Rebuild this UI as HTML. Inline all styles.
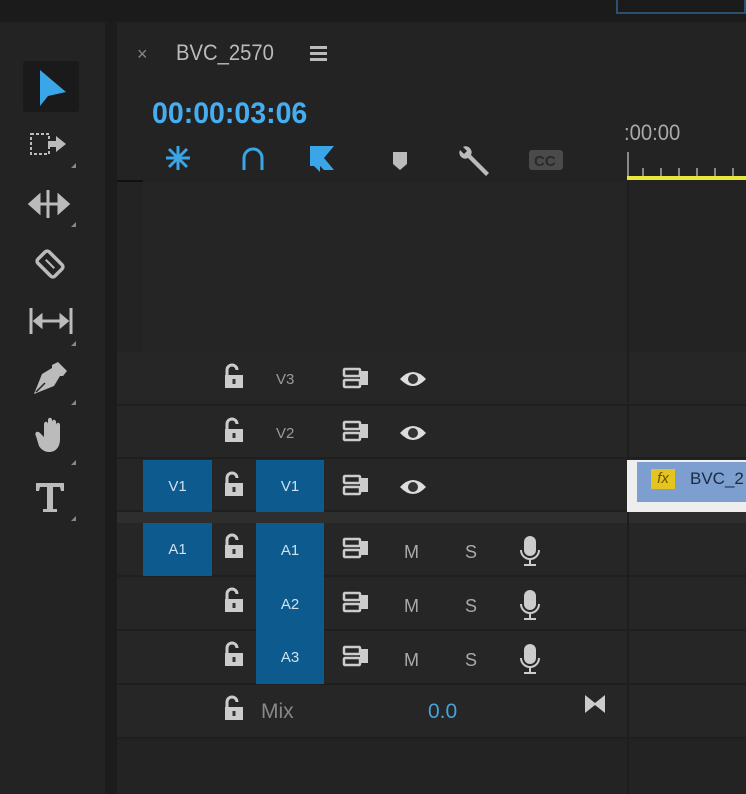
<!DOCTYPE html>
<html><head><meta charset="utf-8"><style>
*{margin:0;padding:0;box-sizing:border-box}
body{width:746px;height:794px;overflow:hidden;background:#232323;font-family:"Liberation Sans",sans-serif;position:relative}
.a{position:absolute}
.row{position:absolute;left:117px;width:629px;background:#262626;border-bottom:2px solid #1f1f1f}
.blue{position:absolute;background:#0c5a8e;color:#cfe0ee;font-size:15px;display:flex;align-items:center;justify-content:center}
.lbl{position:absolute;color:#9a9a9a;font-size:15px}
</style></head><body>
<div class="a" style="left:0;top:0;width:746px;height:22px;background:#1b1b1b"></div>
<div class="a" style="left:616px;top:0;width:130px;height:14px;border:2px solid #2d4f70;border-top:none"></div>
<div class="a" style="left:105px;top:22px;width:12px;height:772px;background:#1c1c1c"></div>
<div class="a" style="left:0;top:22px;width:105px;height:772px;background:#232323"></div>
<div class="a" style="left:23px;top:61px;width:56px;height:51px;background:#1a1a1a;border-radius:3px"></div>
<svg class="a" style="left:0;top:0" width="110" height="530">
<path d="M40 70 L40 106 L48 96 L66 92 Z" fill="#3aa6e8"/>
<g fill="none" stroke="#bbb" stroke-width="2" stroke-dasharray="3 2"><rect x="31" y="134" width="18" height="20"/></g>
<path d="M48 141 h8 v-5 l10 8 l-10 8 v-5 h-8z" fill="#bbb"/>
<path d="M48 190v28M30 204l9-8v16zM68 204l-9-8v16zM38 204h22" stroke="#bbb" stroke-width="3" fill="#bbb"/>
<g transform="rotate(45 50 264)"><rect x="38" y="256" width="24" height="16" rx="3" fill="none" stroke="#bbb" stroke-width="3.5"/><path d="M44 264h12" stroke="#bbb" stroke-width="2"/></g>
<path d="M31 308v26M71 308v26M35 321h32M35 321l6-5v10zM67 321l-6-5v10z" stroke="#bbb" stroke-width="3" fill="#bbb"/>
<path d="M58 362l9 9-4 5-3 0-6 10-20 8 8-20 10-6 0-3z" fill="#bbb"/><path d="M36 392l9-9" stroke="#232323" stroke-width="1.5"/>
<path d="M36 436c-2-3 1-6 4-3l4 4v-13c0-3 4-3 4 0v10-14c0-3 4-3 4 0v14-12c0-3 4-3 4 0v12-9c0-3 4-3 4 0v14c0 8-4 13-11 13-5 0-8-3-10-6z" fill="#bbb"/>
<path d="M36 483h28v8h-3l-1-4h-7v22h4v3h-14v-3h4v-22h-7l-1 4h-3z" fill="#bbb"/>
<g fill="#888"><path d="M76 163l-5 5h5z"/><path d="M76 222l-5 5h5z"/><path d="M76 341l-5 5h5z"/><path d="M76 400l-5 5h5z"/><path d="M76 460l-5 5h5z"/><path d="M76 516l-5 5h5z"/></g>
</svg>
<div class="a" style="left:117px;top:22px;width:629px;height:160px;background:#232323"></div>
<div class="a" style="left:137px;top:44px;color:#888;font-size:18px">×</div>
<div class="a" style="left:176px;top:40px;color:#bbb;font-size:22px;transform:scaleX(0.92);transform-origin:left">BVC_2570</div>
<div class="a" style="left:310px;top:46px;width:17px;height:15px;border-top:3px solid #bbb;border-bottom:3px solid #bbb"><div style="margin-top:3px;height:3px;background:#bbb"></div></div>
<div class="a" style="left:152px;top:97px;color:#46aef0;font-size:30px;font-weight:bold;transform:scaleX(0.95);transform-origin:left">00:00:03:06</div>
<svg class="a" style="left:150px;top:140px" width="430" height="40">
<g stroke="#3aa6e8" stroke-width="3" fill="none"><path d="M28 6v24M16 18h24M19 9l18 18M37 9l-18 18"/><path d="M94 30V18a9 9 0 0 1 18 0v12"/></g>
<path d="M160 6h24l-10 12 10 12h-10l-4-4v6l-6-6h-4z" fill="#3aa6e8"/>
<path d="M243 12h14v12l-7 6-7-6z" fill="#bbb"/>
<path d="M310 10a6 6 0 0 0 8 8l18 18 3-3-18-18a6 6 0 0 0-8-8l4 4-3 3z" fill="#bbb"/>
<rect x="379" y="10" width="34" height="20" rx="3" fill="#4a4a4a"/>
<text x="384" y="26" font-size="15" font-weight="bold" fill="#2a2a2a" font-family="Liberation Sans">CC</text>
</svg>
<div class="a" style="left:117px;top:180px;width:26px;height:2px;background:#111"></div>
<div class="a" style="left:143px;top:182px;width:484px;height:170px;background:#252525"></div>
<div class="a" style="left:627px;top:22px;width:119px;height:160px;background:#232323"></div>
<div class="a" style="left:624px;top:120px;color:#aaa;font-size:22px;transform:scaleX(0.92);transform-origin:left">:00:00</div>
<svg class="a" style="left:627px;top:150px" width="119" height="30"><g stroke="#888" stroke-width="2"><path d="M1 2v24M16 18v8M34 18v8M52 18v8M70 18v8M88 18v8M106 18v8"/></g><rect x="0" y="26" width="119" height="5" fill="#e8e83a"/></svg>
<div class="a" style="left:627px;top:182px;width:2px;height:612px;background:#1e1e1e"></div>
<div class="row" style="top:352px;height:54px"></div>
<div class="row" style="top:406px;height:53px"></div>
<div class="row" style="top:459px;height:53px"></div>
<div class="a" style="left:117px;top:512px;width:629px;height:11px;background:#2e2e2e"></div>
<div class="row" style="top:523px;height:54px"></div>
<div class="row" style="top:577px;height:54px"></div>
<div class="row" style="top:631px;height:54px"></div>
<div class="row" style="top:685px;height:54px"></div>
<div class="a" style="left:117px;top:739px;width:629px;height:55px;background:#232323"></div>
<div class="a" style="left:627px;top:352px;width:2px;height:442px;background:#1e1e1e"></div>
<div class="blue" style="left:143px;top:460px;width:69px;height:52px">V1</div>
<div class="blue" style="left:256px;top:460px;width:68px;height:52px">V1</div>
<div class="blue" style="left:143px;top:523px;width:69px;height:53px">A1</div>
<div class="blue" style="left:256px;top:523px;width:68px;height:54px">A1</div>
<div class="blue" style="left:256px;top:577px;width:68px;height:54px">A2</div>
<div class="blue" style="left:256px;top:631px;width:68px;height:53px">A3</div>
<div class="lbl" style="left:276px;top:371px">V3</div>
<div class="lbl" style="left:276px;top:425px">V2</div>
<div class="lbl" style="left:261px;top:700px;font-size:21px;color:#888">Mix</div>
<div class="a" style="left:428px;top:700px;font-size:21px;color:#4aa0d8">0.0</div>
<svg class="a" style="left:0;top:0" width="746" height="794">
<defs>
<g id="lk"><path d="M-7 0v-6a5 5 0 0 1 10 0" stroke="#ccc" stroke-width="3" fill="none"/><rect x="-9" y="-1" width="18" height="13" fill="#ccc"/><rect x="-1.5" y="3" width="3" height="5" fill="#333"/></g>
<g id="tg"><rect x="-12" y="-9" width="16" height="7" rx="1" fill="none" stroke="#ccc" stroke-width="2.5"/><rect x="-12" y="2" width="16" height="7" rx="1" fill="none" stroke="#ccc" stroke-width="2.5"/><rect x="4" y="-7" width="8" height="14" fill="#ccc"/></g>
<g id="ey"><path d="M-13 0q13-14 26 0q-13 14-26 0z" fill="#ddd"/><circle r="5" fill="#333"/></g>
<g id="mc"><rect x="-6" y="-14" width="12" height="20" rx="6" fill="#ccc"/><path d="M-9 0a9 9 0 0 0 18 0M0 9v6M-6 15h12" stroke="#ccc" stroke-width="2" fill="none"/></g>
</defs>
<use href="#lk" x="234" y="376"/><use href="#lk" x="234" y="430"/><use href="#lk" x="234" y="484"/><use href="#lk" x="234" y="546"/><use href="#lk" x="234" y="600"/><use href="#lk" x="234" y="654"/><use href="#lk" x="234" y="708"/>
<use href="#tg" x="356" y="378"/><use href="#tg" x="356" y="431"/><use href="#tg" x="356" y="485"/><use href="#tg" x="356" y="548"/><use href="#tg" x="356" y="602"/><use href="#tg" x="356" y="656"/>
<use href="#ey" x="413" y="379"/><use href="#ey" x="413" y="433"/><use href="#ey" x="413" y="487"/>
<use href="#mc" x="530" y="550"/><use href="#mc" x="530" y="604"/><use href="#mc" x="530" y="658"/>
<path d="M585 695l10 8 10-8v18l-10-8-10 8z" fill="#ccc"/>
<g font-family="Liberation Sans" font-size="18" fill="#aaa"><text x="404" y="558">M</text><text x="465" y="558">S</text><text x="404" y="612">M</text><text x="465" y="612">S</text><text x="404" y="666">M</text><text x="465" y="666">S</text></g>
</svg>
<div class="a" style="left:627px;top:460px;width:119px;height:52px;background:#eee"></div>
<div class="a" style="left:637px;top:462px;width:109px;height:40px;background:#7c9fcf"></div>
<div class="a" style="left:651px;top:469px;width:24px;height:20px;background:#e6c420;color:#6a5200;font-style:italic;font-size:15px;text-align:center;line-height:20px">fx</div>
<div class="a" style="left:690px;top:469px;color:#1a2a44;font-size:17px">BVC_2</div>
</body></html>
